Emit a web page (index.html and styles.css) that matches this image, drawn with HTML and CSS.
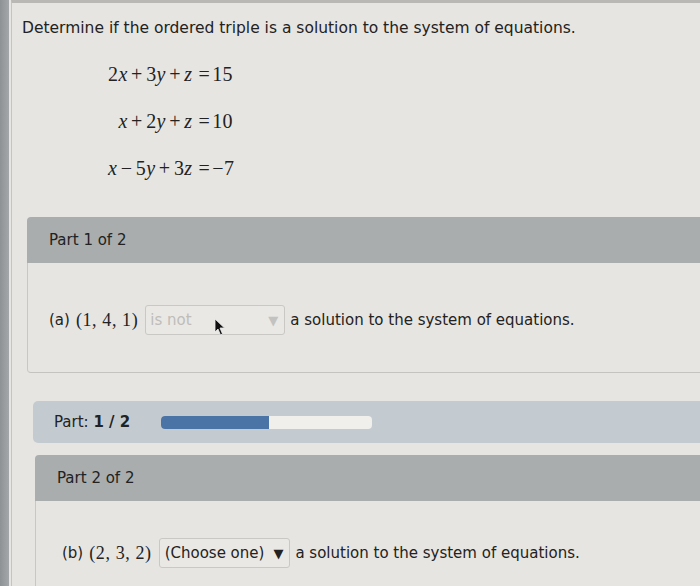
FILE: index.html
```html
<!DOCTYPE html>
<html lang="en">
<head>
<meta charset="UTF-8">
<title>System of equations</title>
<link rel="stylesheet" href="styles.css">
</head>
<body>

<div class="edge"></div>
<div class="page">
  <p class="prompt">Determine if the ordered triple is a solution to the system of equations.</p>

  <div class="system">
    <span class="lhs">2<i>x</i> + 3<i>y</i> + <i>z</i></span><span class="eq">=</span><span class="rhs">15</span>
    <span class="lhs"><i>x</i> + 2<i>y</i> + <i>z</i></span><span class="eq">=</span><span class="rhs">10</span>
    <span class="lhs"><i>x</i> − 5<i>y</i> + 3<i>z</i></span><span class="eq">=</span><span class="rhs">−7</span>
  </div>

  <div class="part part1">
    <div class="part-head">Part 1 of 2</div>
    <div class="part-body">
      <div class="row">
        <span>(a)</span>
        <span class="pt">(1, 4, 1)</span>
        <span class="pick disabled">is not<span class="arrow">▼</span>
          <svg class="cursor" width="12" height="18" viewBox="0 0 12 18"><path d="M1 1 L1 14 L4 11 L6.5 17 L8.5 16 L6 10 L10.5 10 Z" fill="#111" stroke="#eee" stroke-width="0.8"/></svg>
        </span>
        <span>a solution to the system of equations.</span>
      </div>
    </div>
  </div>

  <div class="progress">
    <span class="plabel">Part: <b>1 / 2</b></span>
    <div class="track"><div class="fill" style="width:51%"></div></div>
  </div>

  <div class="part part2">
    <div class="part-head">Part 2 of 2</div>
    <div class="part-body">
      <div class="row">
        <span>(b)</span>
        <span class="pt">(2, 3, 2)</span>
        <span class="pick">(Choose one)<span class="arrow">▼</span></span>
        <span>a solution to the system of equations.</span>
      </div>
    </div>
  </div>
</div>

</body>
</html>
```

FILE: styles.css
```css
html, body { margin:0; padding:0; height:100%; overflow:hidden; }
body { background:#e7e5e1; font-family:"DejaVu Sans", Verdana, sans-serif; color:#222; font-size:15px; display:flex; }
.edge { width:9px; background:linear-gradient(to right, #8d9295, #a3a7a9); flex:none; }
.page { flex:1; border-left:1px solid #c5c4c0; margin-left:2px; border-top:3px solid #b9b8b5; padding-top:16px; overflow:hidden; }
.prompt { margin:0 0 0 10px; font-size:15.5px; }
.system { display:grid; grid-template-columns:auto auto auto; justify-content:start; column-gap:2px; row-gap:22px; margin:25px 0 0 96px; font-family:"Liberation Serif", serif; font-size:20px; line-height:25px; letter-spacing:0.4px; word-spacing:-2px; }
.lhs { text-align:right; }
.eq { margin-left:4px; }
.part { margin-top:36px; }
.part1 { margin-left:15px; }
.part2 { margin-left:23px; margin-top:12px; }
.part-head { background:#a9adae; height:46px; padding-left:22px; display:flex; align-items:center; border-radius:4px 0 0 0; }
.part-body { border-left:1px solid #c8c7c3; border-bottom:1px solid #c4c3bf; border-radius:0 0 0 4px; height:109px; }
.part2 .part-body { height:100px; border-bottom:none; }
.row { display:flex; align-items:center; gap:5px; padding:42px 0 0 21px; white-space:nowrap; }
.part2 .row { padding:37px 0 0 26px; }
.pt { font-family:"Liberation Serif", serif; font-size:18px; letter-spacing:0.6px; margin:0 2px 0 1px; }
.pick { position:relative; display:flex; align-items:center; justify-content:space-between; border:1px solid #c9c8c4; border-radius:3px; height:28px; padding:0 6px 0 4px; background:#e9e8e4; }
.part1 .pick { width:128px; color:#bebdba; }
.part2 .pick { color:#222; gap:9px; padding:0 6px 0 5px; }
.arrow { font-size:13px; }
.part1 .arrow { color:#c2c2c0; }
.cursor { position:absolute; left:68px; top:12px; }
.progress { margin:28px 0 0 21px; background:#c3cbd0; height:42px; border-radius:5px 0 0 5px; display:flex; align-items:center; padding-left:21px; }
.plabel { width:107px; }
.track { width:211px; height:13px; background:#f0efeb; border-radius:4px; overflow:hidden; }
.fill { height:100%; background:#4a73a6; }
```
